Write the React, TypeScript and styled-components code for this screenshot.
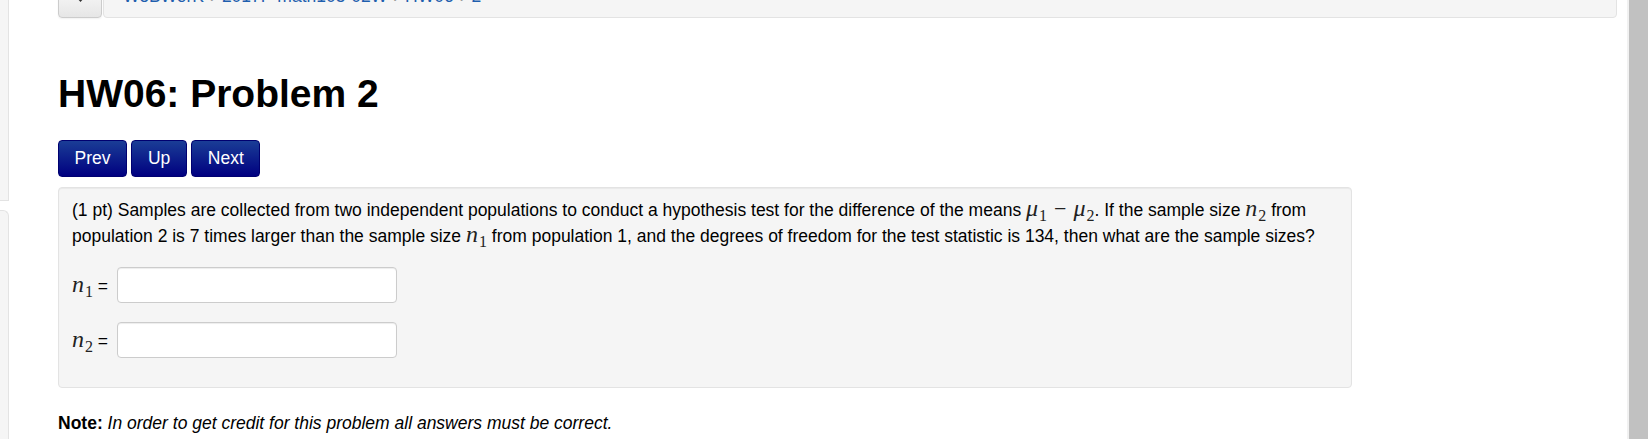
import React from 'react'
import styled, { createGlobalStyle } from 'styled-components'

const GlobalStyle = createGlobalStyle`
  html, body {
    margin: 0;
    padding: 0;
    background: #ffffff;
    overflow: hidden;
  }

  body {
    font-family: "Liberation Sans", Arial, sans-serif;
    font-size: 17.5px;
    color: #000000;
  }
`

const Page = styled.div`
  display: flex;
  width: 1648px;
  height: 439px;
  overflow: hidden;
`

const Sidebar = styled.div`
  width: 9px;
  flex-shrink: 0;
  display: flex;
  flex-direction: column;
  gap: 9px;
`

const SidebarPanel = styled.div<{ $lower?: boolean }>`
  box-sizing: border-box;
  background: #f5f5f5;
  border-right: 1px solid #e3e3e3;
  height: ${(p) => (p.$lower ? 'auto' : '201px')};
  flex: ${(p) => (p.$lower ? '1' : 'none')};
  border-bottom: ${(p) => (p.$lower ? 'none' : '1px solid #e3e3e3')};
  border-top: ${(p) => (p.$lower ? '1px solid #e3e3e3' : 'none')};
  border-top-right-radius: ${(p) => (p.$lower ? '6px' : '0')};
`

const Main = styled.div`
  flex: 1;
  min-width: 0;
  padding: 0 10px 0 49px;
  display: flex;
  flex-direction: column;
  align-items: flex-start;
`

const Breadcrumbs = styled.div`
  align-self: stretch;
  display: flex;
  gap: 1px;
  height: 40px;
  margin-top: -22px;
`

const ToggleButton = styled.button`
  box-sizing: border-box;
  width: 44px;
  padding: 18px 0 0;
  display: flex;
  justify-content: center;
  align-items: flex-start;
  border: 1px solid #cccccc;
  border-radius: 4px;
  background: linear-gradient(to bottom, #ffffff, #e6e6e6);
  box-shadow: 0 1px 2px rgba(0, 0, 0, 0.06);
`

const Crumbs = styled.div`
  flex: 1;
  box-sizing: border-box;
  padding: 5px 19px;
  line-height: 24px;
  background: #f5f5f5;
  border: 1px solid #e3e3e3;
  border-radius: 4px;
  color: #1f5fae;
  white-space: nowrap;
`

const Divider = styled.span`
  color: #999999;
  margin: 0 6px;
`

const Title = styled.h1`
  margin: 54px 0 0;
  font-size: 39px;
  line-height: 43px;
  font-weight: 700;
  color: #000000;
`

const NavBar = styled.div`
  display: flex;
  gap: 4.5px;
  margin-top: 25px;
`

const NavButton = styled.button`
  height: 37px;
  padding: 0 15.5px;
  font-family: "Liberation Sans", Arial, sans-serif;
  font-size: 17.5px;
  color: #ffffff;
  border: 1px solid #000070;
  border-radius: 4px;
  background: linear-gradient(to bottom, #1a3d96, #000080);
  cursor: pointer;
`

const ProblemBox = styled.div`
  box-sizing: border-box;
  width: 1294px;
  margin-top: 10px;
  padding: 10px 13px 29px;
  background: #f5f5f5;
  border: 1px solid #e3e3e3;
  border-radius: 4px;
  box-shadow: inset 0 1px 1px rgba(0, 0, 0, 0.05);
`

const Question = styled.p`
  margin: 0;
  line-height: 25.5px;
`

const MathVar = styled.span`
  font-family: "Liberation Serif", "Times New Roman", serif;
  font-style: italic;
  font-size: 24px;
  line-height: 0.9;
  color: #222222;
`

const MathSub = styled.span`
  font-family: "Liberation Serif", "Times New Roman", serif;
  font-style: normal;
  font-size: 16px;
  line-height: 1;
  position: relative;
  top: 5px;
  margin-left: 1px;
  color: #222222;
`

const MathOp = styled.span`
  font-family: "Liberation Serif", "Times New Roman", serif;
  font-size: 22px;
  line-height: 0.9;
  margin: 0 7px;
  color: #222222;
`

const AnswerList = styled.div`
  margin-top: 18px;
  display: flex;
  flex-direction: column;
  gap: 19px;
`

const AnswerRow = styled.div`
  display: flex;
  align-items: center;
  height: 36px;
`

const AnswerLabel = styled.label`
  white-space: nowrap;
`

const AnswerInput = styled.input`
  box-sizing: border-box;
  margin-left: 9px;
  width: 280px;
  height: 36px;
  background: #ffffff;
  border: 1px solid #cccccc;
  border-radius: 4px;
  box-shadow: inset 0 1px 1px rgba(0, 0, 0, 0.075);
  outline: none;
`

const Note = styled.p`
  margin: 23px 0 0;
  line-height: 25.5px;

  em {
    font-style: italic;
  }
`

const Scrollbar = styled.div`
  width: 21px;
  flex-shrink: 0;
  box-sizing: border-box;
  padding-left: 2px;
  background: #f1f1f1;
  display: flex;
`

const Thumb = styled.div`
  flex: 1;
  background: #c1c1c1;
`

const Var = ({ name, sub }: { name: string; sub: string }) => (
  <>
    <MathVar>{name}</MathVar>
    <MathSub>{sub}</MathSub>
  </>
)

const answers = ['1', '2']

const App = () => {
  return (
    <Page>
      <GlobalStyle />
      <Sidebar>
        <SidebarPanel />
        <SidebarPanel $lower />
      </Sidebar>
      <Main>
        <Breadcrumbs>
          <ToggleButton type="button">
            <svg width="9" height="5" viewBox="0 0 9 5">
              <path d="M0 0h9L4.5 5z" fill="#333" />
            </svg>
          </ToggleButton>
          <Crumbs>
            WeBWorK<Divider>›</Divider>2017F-math105-02W<Divider>›</Divider>HW06<Divider>›</Divider>2
          </Crumbs>
        </Breadcrumbs>

        <Title>HW06: Problem 2</Title>

        <NavBar>
          <NavButton type="button">Prev</NavButton>
          <NavButton type="button">Up</NavButton>
          <NavButton type="button">Next</NavButton>
        </NavBar>

        <ProblemBox>
          <Question>
            (1 pt) Samples are collected from two independent populations to conduct a hypothesis
            test for the difference of the means <Var name="μ" sub="1" />
            <MathOp>−</MathOp>
            <Var name="μ" sub="2" />. If the sample size <Var name="n" sub="2" /> from population 2
            is 7 times larger than the sample size <Var name="n" sub="1" /> from population 1, and
            the degrees of freedom for the test statistic is 134, then what are the sample sizes?
          </Question>
          <AnswerList>
            {answers.map((n) => (
              <AnswerRow key={n}>
                <AnswerLabel>
                  <Var name="n" sub={n} /> =
                </AnswerLabel>
                <AnswerInput type="text" />
              </AnswerRow>
            ))}
          </AnswerList>
        </ProblemBox>

        <Note>
          <strong>Note:</strong> <em>In order to get credit for this problem all answers must be correct.</em>
        </Note>
      </Main>
      <Scrollbar>
        <Thumb />
      </Scrollbar>
    </Page>
  )
}

export default App
